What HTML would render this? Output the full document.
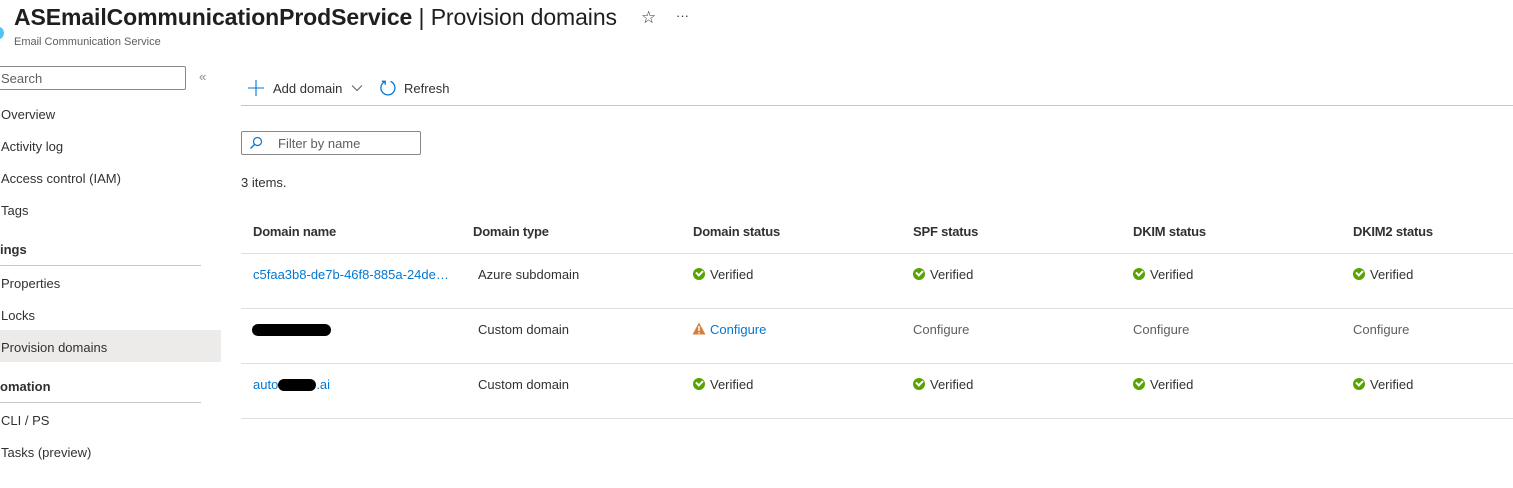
<!DOCTYPE html>
<html><head><style>
body{margin:0;width:1513px;height:488px;background:#fff;font-family:"Liberation Sans",sans-serif;color:#323130;position:relative;overflow:hidden;font-size:13px}
.a{position:absolute;white-space:nowrap}
.link{color:#0078d4}
.hr{position:absolute;height:1px;background:#e1dfdd}
.chk{display:inline-block;width:12px;height:12px;border-radius:50%;background:#57a300;vertical-align:-1px;margin-right:5px;position:relative}
.chk:after{content:"";position:absolute;left:3px;top:2px;width:5px;height:3px;border-left:2px solid #fff;border-bottom:2px solid #fff;transform:rotate(-45deg)}
.g{color:#605e5c}
.h{font-weight:bold;color:#323130;letter-spacing:-0.2px}
</style></head><body>
<div class="a" style="left:-6px;top:27px;width:10px;height:12px;border-radius:50%;background:#50c3f0"></div>
<div class="a" style="left:14px;top:4px;font-size:23px;color:#201f1e;letter-spacing:-0.1px"><b style="font-weight:600">ASEmailCommunicationProdService</b> | Provision domains</div>
<div class="a" style="left:641px;top:8px;font-size:17px">☆</div>
<div class="a" style="left:676px;top:8px;font-size:13px">···</div>
<div class="a" style="left:14px;top:36px;font-size:11px;color:#605e5c">Email Communication Service</div>
<div class="a" style="left:-2px;top:66px;width:186px;height:22px;border:1px solid #8a8886;border-radius:2px"></div>
<div class="a" style="left:1px;top:71px;color:#605e5c">Search</div>
<div class="a" style="left:199px;top:69px;color:#8a8886">«</div>
<div class="a" style="left:1px;top:107px">Overview</div>
<div class="a" style="left:1px;top:139px">Activity log</div>
<div class="a" style="left:1px;top:171px">Access control (IAM)</div>
<div class="a" style="left:1px;top:203px">Tags</div>
<div class="a" style="left:0;top:242px;font-weight:bold">ings</div>
<div class="hr" style="left:0;top:265px;width:201px;background:#c8c6c4"></div>
<div class="a" style="left:1px;top:276px">Properties</div>
<div class="a" style="left:1px;top:308px">Locks</div>
<div class="a" style="left:0;top:330px;width:221px;height:32px;background:#edebe9"></div>
<div class="a" style="left:1px;top:340px">Provision domains</div>
<div class="a" style="left:0;top:379px;font-weight:bold">omation</div>
<div class="hr" style="left:0;top:402px;width:201px;background:#c8c6c4"></div>
<div class="a" style="left:1px;top:413px">CLI / PS</div>
<div class="a" style="left:1px;top:445px">Tasks (preview)</div>
<svg class="a" style="left:248px;top:80px" width="16" height="16"><path d="M8 0v16M0 8h16" stroke="#0078d4" stroke-width="1.1"/></svg>
<div class="a" style="left:273px;top:81px">Add domain</div>
<svg class="a" style="left:351px;top:84px" width="12" height="8"><path d="M1 1.5l5 5 5-5" fill="none" stroke="#605e5c" stroke-width="1"/></svg>
<svg class="a" style="left:379px;top:79px" width="18" height="18" viewBox="0 0 18 18"><path d="M5.5 2.8A7 7 0 1 0 11.5 2.4" fill="none" stroke="#0078d4" stroke-width="1.3"/><path d="M2.8 2.3h3.4v3.4" fill="none" stroke="#0078d4" stroke-width="1.3"/></svg>
<div class="a" style="left:404px;top:81px">Refresh</div>
<div class="hr" style="left:241px;top:105px;width:1272px;background:#c8c6c4"></div>
<div class="a" style="left:241px;top:131px;width:178px;height:22px;border:1px solid #8a8886;border-radius:2px"></div>
<svg class="a" style="left:249px;top:136px" width="14" height="14"><circle cx="8.5" cy="5.5" r="4" fill="none" stroke="#0078d4" stroke-width="1.2"/><path d="M5.5 8.5L1.5 12.5" stroke="#0078d4" stroke-width="1.3"/></svg>
<div class="a" style="left:278px;top:136px;color:#605e5c">Filter by name</div>
<div class="a" style="left:241px;top:175px">3 items.</div>
<div class="a h" style="left:253px;top:224px">Domain name</div>
<div class="a h" style="left:473px;top:224px">Domain type</div>
<div class="a h" style="left:693px;top:224px">Domain status</div>
<div class="a h" style="left:913px;top:224px">SPF status</div>
<div class="a h" style="left:1133px;top:224px">DKIM status</div>
<div class="a h" style="left:1353px;top:224px">DKIM2 status</div>
<div class="hr" style="left:241px;top:253px;width:1272px"></div>
<div class="hr" style="left:241px;top:308px;width:1272px"></div>
<div class="hr" style="left:241px;top:363px;width:1272px"></div>
<div class="hr" style="left:241px;top:418px;width:1272px"></div>
<div class="a link" style="left:253px;top:267px;width:200px;overflow:hidden;text-overflow:ellipsis">c5faa3b8-de7b-46f8-885a-24de8fbd2c11</div>
<div class="a" style="left:478px;top:267px">Azure subdomain</div>
<div class="a" style="left:693px;top:267px"><span class="chk"></span>Verified</div>
<div class="a" style="left:913px;top:267px"><span class="chk"></span>Verified</div>
<div class="a" style="left:1133px;top:267px"><span class="chk"></span>Verified</div>
<div class="a" style="left:1353px;top:267px"><span class="chk"></span>Verified</div>
<div class="a" style="left:252px;top:324px;width:79px;height:12px;border-radius:6px;background:#000"></div>
<div class="a" style="left:478px;top:322px">Custom domain</div>
<svg class="a" style="left:692px;top:322px" width="14" height="13"><path d="M7 0.5L13.5 12.5H0.5Z" fill="#d67f3c"/><path d="M7 4v5M7 10.3v1.2" stroke="#fff" stroke-width="1.5"/></svg>
<div class="a link" style="left:710px;top:322px">Configure</div>
<div class="a g" style="left:913px;top:322px">Configure</div>
<div class="a g" style="left:1133px;top:322px">Configure</div>
<div class="a g" style="left:1353px;top:322px">Configure</div>
<div class="a link" style="left:253px;top:377px">auto<span style="display:inline-block;width:38px;height:12px;background:#000;border-radius:6px;vertical-align:-2px"></span>.ai</div>
<div class="a" style="left:478px;top:377px">Custom domain</div>
<div class="a" style="left:693px;top:377px"><span class="chk"></span>Verified</div>
<div class="a" style="left:913px;top:377px"><span class="chk"></span>Verified</div>
<div class="a" style="left:1133px;top:377px"><span class="chk"></span>Verified</div>
<div class="a" style="left:1353px;top:377px"><span class="chk"></span>Verified</div>
</body></html>
